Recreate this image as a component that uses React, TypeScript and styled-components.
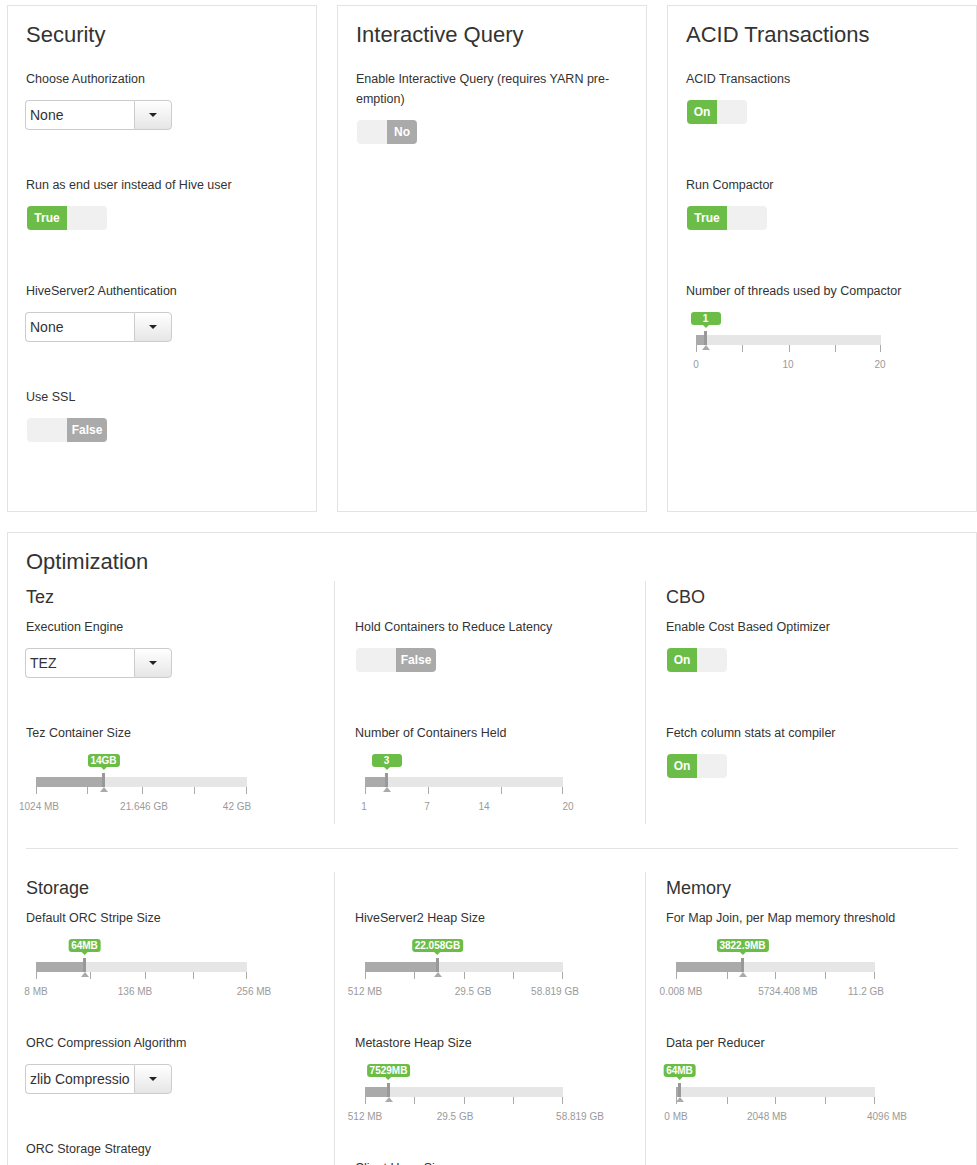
import React from 'react';
import styled, { createGlobalStyle } from 'styled-components';

const GREEN = '#6cbd47';
const LINE = '#e3e3e3';

const GlobalStyle = createGlobalStyle`
  html, body { margin: 0; padding: 0; background: #fff; }
  body {
    font-family: "Liberation Sans", Arial, Helvetica, sans-serif;
    color: #333;
  }
  * { box-sizing: border-box; }
`;

const Page = styled.div`
  width: 977px;
  padding: 5px 0 40px 7px;
`;

const TopRow = styled.div`
  display: flex;
  gap: 20px;
  align-items: stretch;
`;

const Card = styled.section`
  border: 1px solid ${LINE};
  background: #fff;
  padding: 17px 18px 18px;
`;

const SmallCard = styled(Card)`
  width: 310px;
  flex: none;
`;

const WideCard = styled(Card)`
  width: 970px;
  margin-top: 20px;
`;

const CardTitle = styled.h3<{ $tight?: boolean }>`
  margin: 0 0 ${(p) => (p.$tight ? 7 : 22)}px;
  font-size: 22px;
  line-height: 24px;
  font-weight: 400;
  color: #333;
`;

const SubTitle = styled.h4`
  margin: 0 0 10px;
  min-height: 20px;
  font-size: 18px;
  line-height: 20px;
  font-weight: 400;
  color: #333;
`;

const ColumnGrid = styled.div`
  display: grid;
  grid-template-columns: 308px 311px 1fr;
`;

const Column = styled.div<{ $divider?: boolean }>`
  padding: 6px 0 10px ${(p) => (p.$divider ? 20 : 0)}px;
  border-left: ${(p) => (p.$divider ? `1px solid ${LINE}` : 'none')};
`;

const Divider = styled.hr`
  margin: 24px 0 23px;
  border: 0;
  border-top: 1px solid ${LINE};
  height: 0;
`;

const Field = styled.div<{ $tall?: boolean }>`
  min-height: ${(p) => (p.$tall ? 125 : 106)}px;
`;

const FieldLabel = styled.div`
  font-size: 12.5px;
  line-height: 20px;
  margin-bottom: 11px;
  color: #333;
`;

/* ---------- dropdown ---------- */
const Select = styled.div`
  display: flex;
  width: 147px;
  height: 30px;
  margin-left: -1px;
`;

const SelectValue = styled.div`
  flex: 1;
  min-width: 0;
  border: 1px solid #ccc;
  border-right: 0;
  border-radius: 4px 0 0 4px;
  padding: 0 4px;
  background: #fff;
`;

const SelectText = styled.div`
  font-size: 14px;
  line-height: 28px;
  white-space: nowrap;
  overflow: hidden;
  color: #333;
`;

const SelectButton = styled.div`
  width: 38px;
  flex: none;
  border: 1px solid #ccc;
  border-radius: 0 4px 4px 0;
  background: linear-gradient(#ffffff, #e6e6e6);
  display: flex;
  align-items: center;
  justify-content: center;
`;

const Caret = styled.span`
  width: 0;
  height: 0;
  border-left: 4px solid transparent;
  border-right: 4px solid transparent;
  border-top: 4px solid #222;
`;

const Dropdown = ({ value }: { value: string }) => (
  <Select>
    <SelectValue>
      <SelectText>{value}</SelectText>
    </SelectValue>
    <SelectButton>
      <Caret />
    </SelectButton>
  </Select>
);

/* ---------- toggle ---------- */
const Switch = styled.div<{ $w: number }>`
  display: flex;
  width: ${(p) => p.$w * 2}px;
  height: 24px;
  margin-left: 1px;
  border-radius: 4px;
  overflow: hidden;
  background: #f0f0f0;
`;

const SwitchHandle = styled.span<{ $on: boolean; $w: number }>`
  width: ${(p) => p.$w}px;
  display: flex;
  align-items: center;
  justify-content: center;
  background: ${(p) => (p.$on ? GREEN : '#aaaaaa')};
  color: #fff;
  font-size: 12px;
  font-weight: 700;
`;

const SwitchBlank = styled.span<{ $w: number }>`
  width: ${(p) => p.$w}px;
`;

const Toggle = ({ on, text, w }: { on: boolean; text: string; w: number }) => (
  <Switch $w={w}>
    {on ? (
      <>
        <SwitchHandle $on $w={w}>{text}</SwitchHandle>
        <SwitchBlank $w={w} />
      </>
    ) : (
      <>
        <SwitchBlank $w={w} />
        <SwitchHandle $on={false} $w={w}>{text}</SwitchHandle>
      </>
    )}
  </Switch>
);

/* ---------- slider ---------- */
const SliderWrap = styled.div<{ $w: number }>`
  position: relative;
  margin-left: 10px;
  width: ${(p) => p.$w}px;
  height: 60px;
`;

const Track = styled.div`
  position: absolute;
  left: 0;
  right: 0;
  top: 23px;
  height: 10px;
  background: #e6e6e6;
`;

const Fill = styled.div`
  position: absolute;
  left: 0;
  top: 0;
  bottom: 0;
  background: #aaaaaa;
`;

const HandleBar = styled.div`
  position: absolute;
  top: 19px;
  width: 3px;
  height: 14px;
  margin-left: -1px;
  background: #999;
`;

const HandleArrow = styled.div`
  position: absolute;
  top: 33px;
  width: 0;
  height: 0;
  margin-left: -4px;
  border-left: 4px solid transparent;
  border-right: 4px solid transparent;
  border-bottom: 5px solid #aaa;
`;

const Tip = styled.div`
  position: absolute;
  top: 0;
  transform: translateX(-50%);
  min-width: 30px;
  height: 13px;
  padding: 0 3px;
  border-radius: 3px;
  background: ${GREEN};
  color: #fff;
  font-size: 10px;
  font-weight: 700;
  line-height: 13px;
  text-align: center;
  white-space: nowrap;
  &::after {
    content: '';
    position: absolute;
    left: 50%;
    bottom: -3px;
    margin-left: -3px;
    border-left: 3px solid transparent;
    border-right: 3px solid transparent;
    border-top: 3px solid ${GREEN};
  }
`;

const Tick = styled.div`
  position: absolute;
  top: 33px;
  width: 1px;
  height: 7px;
  background: #aaa;
`;

const TickLabel = styled.div`
  position: absolute;
  top: 47px;
  transform: translateX(-50%);
  font-size: 10px;
  line-height: 12px;
  color: #9a9a9a;
  white-space: nowrap;
`;

type SliderProps = {
  w: number;
  value: number;
  tip: string;
  ticks: number[];
  labels: [number, string][];
};

const Slider = ({ w, value, tip, ticks, labels }: SliderProps) => (
  <SliderWrap $w={w}>
    <Tip style={{ left: value + 0.5 }}>{tip}</Tip>
    <Track>
      <Fill style={{ width: value + 2 }} />
    </Track>
    <HandleBar style={{ left: value }} />
    <HandleArrow style={{ left: value + 0.5 }} />
    {ticks.map((t) => (
      <Tick key={t} style={{ left: t }} />
    ))}
    {labels.map(([at, text]) => (
      <TickLabel key={text + at} style={{ left: at }}>
        {text}
      </TickLabel>
    ))}
  </SliderWrap>
);

const T5_211 = [0, 51, 106, 158, 210];
const HEAP_TICKS = [0, 49, 99, 148, 197];
const MEM_TICKS = [0, 51, 99, 149, 198];

export default function App() {
  return (
    <Page>
      <GlobalStyle />
      <TopRow>
        <SmallCard>
          <CardTitle>Security</CardTitle>
          <Field>
            <FieldLabel>Choose Authorization</FieldLabel>
            <Dropdown value="None" />
          </Field>
          <Field>
            <FieldLabel>Run as end user instead of Hive user</FieldLabel>
            <Toggle on text="True" w={40} />
          </Field>
          <Field>
            <FieldLabel>HiveServer2 Authentication</FieldLabel>
            <Dropdown value="None" />
          </Field>
          <Field>
            <FieldLabel>Use SSL</FieldLabel>
            <Toggle on={false} text="False" w={40} />
          </Field>
        </SmallCard>

        <SmallCard>
          <CardTitle>Interactive Query</CardTitle>
          <Field>
            <FieldLabel>Enable Interactive Query (requires YARN pre-emption)</FieldLabel>
            <Toggle on={false} text="No" w={30} />
          </Field>
        </SmallCard>

        <SmallCard>
          <CardTitle>ACID Transactions</CardTitle>
          <Field>
            <FieldLabel>ACID Transactions</FieldLabel>
            <Toggle on text="On" w={30} />
          </Field>
          <Field>
            <FieldLabel>Run Compactor</FieldLabel>
            <Toggle on text="True" w={40} />
          </Field>
          <Field>
            <FieldLabel>Number of threads used by Compactor</FieldLabel>
            <Slider
              w={185}
              value={9}
              tip="1"
              ticks={[0, 46, 93, 139, 184]}
              labels={[
                [0, '0'],
                [92, '10'],
                [184, '20'],
              ]}
            />
          </Field>
        </SmallCard>
      </TopRow>

      <WideCard>
        <CardTitle $tight>Optimization</CardTitle>
        <ColumnGrid>
          <Column>
            <SubTitle>Tez</SubTitle>
            <Field>
              <FieldLabel>Execution Engine</FieldLabel>
              <Dropdown value="TEZ" />
            </Field>
            <div>
              <FieldLabel>Tez Container Size</FieldLabel>
              <Slider
                w={211}
                value={67}
                tip="14GB"
                ticks={T5_211}
                labels={[
                  [3, '1024 MB'],
                  [108, '21.646 GB'],
                  [201, '42 GB'],
                ]}
              />
            </div>
          </Column>
          <Column $divider>
            <SubTitle />
            <Field>
              <FieldLabel>Hold Containers to Reduce Latency</FieldLabel>
              <Toggle on={false} text="False" w={40} />
            </Field>
            <div>
              <FieldLabel>Number of Containers Held</FieldLabel>
              <Slider
                w={198}
                value={21}
                tip="3"
                ticks={[0, 63, 136, 197]}
                labels={[
                  [-1, '1'],
                  [62, '7'],
                  [119, '14'],
                  [203, '20'],
                ]}
              />
            </div>
          </Column>
          <Column $divider>
            <SubTitle>CBO</SubTitle>
            <Field>
              <FieldLabel>Enable Cost Based Optimizer</FieldLabel>
              <Toggle on text="On" w={30} />
            </Field>
            <div>
              <FieldLabel>Fetch column stats at compiler</FieldLabel>
              <Toggle on text="On" w={30} />
            </div>
          </Column>
        </ColumnGrid>

        <Divider />

        <ColumnGrid>
          <Column>
            <SubTitle>Storage</SubTitle>
            <Field $tall>
              <FieldLabel>Default ORC Stripe Size</FieldLabel>
              <Slider
                w={211}
                value={48}
                tip="64MB"
                ticks={[0, 54, 109, 157, 210]}
                labels={[
                  [0, '8 MB'],
                  [99, '136 MB'],
                  [218, '256 MB'],
                ]}
              />
            </Field>
            <Field>
              <FieldLabel>ORC Compression Algorithm</FieldLabel>
              <Dropdown value="zlib Compression" />
            </Field>
            <Field>
              <FieldLabel>ORC Storage Strategy</FieldLabel>
              <Dropdown value="Speed" />
            </Field>
          </Column>
          <Column $divider>
            <SubTitle />
            <Field $tall>
              <FieldLabel>HiveServer2 Heap Size</FieldLabel>
              <Slider
                w={198}
                value={72}
                tip="22.058GB"
                ticks={HEAP_TICKS}
                labels={[
                  [0, '512 MB'],
                  [108, '29.5 GB'],
                  [190, '58.819 GB'],
                ]}
              />
            </Field>
            <Field $tall>
              <FieldLabel>Metastore Heap Size</FieldLabel>
              <Slider
                w={198}
                value={23}
                tip="7529MB"
                ticks={HEAP_TICKS}
                labels={[
                  [0, '512 MB'],
                  [90, '29.5 GB'],
                  [215, '58.819 GB'],
                ]}
              />
            </Field>
            <Field $tall>
              <FieldLabel>Client Heap Size</FieldLabel>
              <Slider
                w={198}
                value={40}
                tip="1024MB"
                ticks={HEAP_TICKS}
                labels={[
                  [0, '512 MB'],
                  [99, '8 GB'],
                  [197, '16 GB'],
                ]}
              />
            </Field>
          </Column>
          <Column $divider>
            <SubTitle>Memory</SubTitle>
            <Field $tall>
              <FieldLabel>For Map Join, per Map memory threshold</FieldLabel>
              <Slider
                w={199}
                value={66}
                tip="3822.9MB"
                ticks={MEM_TICKS}
                labels={[
                  [5, '0.008 MB'],
                  [112, '5734.408 MB'],
                  [190, '11.2 GB'],
                ]}
              />
            </Field>
            <Field $tall>
              <FieldLabel>Data per Reducer</FieldLabel>
              <Slider
                w={199}
                value={3}
                tip="64MB"
                ticks={MEM_TICKS}
                labels={[
                  [0, '0 MB'],
                  [91, '2048 MB'],
                  [211, '4096 MB'],
                ]}
              />
            </Field>
          </Column>
        </ColumnGrid>
      </WideCard>
    </Page>
  );
}
